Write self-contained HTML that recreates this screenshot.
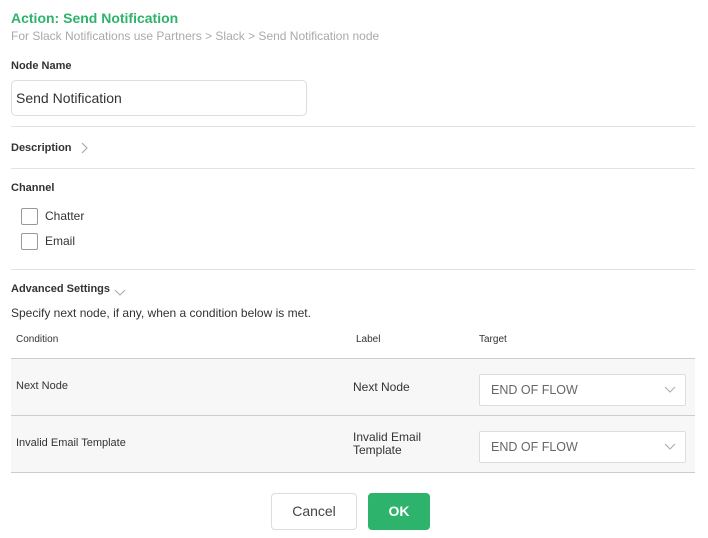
<!DOCTYPE html>
<html><head><style>
body{margin:0;width:708px;height:538px;background:#fff;font-family:"Liberation Sans",sans-serif;position:relative;overflow:hidden;color:#333}
.a{position:absolute;white-space:nowrap}
.lbl{font-size:11px;font-weight:bold;color:#333}
.hr{position:absolute;left:11px;width:684px;height:1px;background:#e2e2e2}
.cb{position:absolute;left:21px;width:15px;height:15px;border:1px solid #999;border-radius:2px;background:#fff}
.sel{position:absolute;left:479px;width:205px;height:30px;border:1px solid #ddd;border-radius:2px;background:#fff;font-size:12.5px;color:#666}
.sel span{position:absolute;left:11px;top:8px}
.sel svg{position:absolute;right:9px;top:11px}
</style></head><body>
<div class="a" style="left:11px;top:10px;font-size:14px;font-weight:bold;color:#2db36b">Action: Send Notification</div>
<div class="a" style="left:11px;top:29px;font-size:12px;color:#aaa">For Slack Notifications use Partners &gt; Slack &gt; Send Notification node</div>
<div class="a lbl" style="left:11px;top:60px">Node Name</div>
<div class="a" style="left:11px;top:80px;width:294px;height:34px;border:1px solid #ddd;border-radius:5px"></div>
<div class="a" style="left:16px;top:90px;font-size:14px;color:#333">Send Notification</div>
<div class="hr" style="top:126px"></div>
<div class="a lbl" style="left:11px;top:142px">Description</div>
<svg class="a" style="left:80px;top:142px" width="8" height="12"><path d="M2 1l5 5-5 5" stroke="#aaa" fill="none" stroke-width="1.2"/></svg>
<div class="hr" style="top:168px"></div>
<div class="a lbl" style="left:11px;top:182px">Channel</div>
<div class="cb" style="top:208px"></div><div class="a" style="left:45px;top:209px;font-size:12px">Chatter</div>
<div class="cb" style="top:233px"></div><div class="a" style="left:45px;top:234px;font-size:12px">Email</div>
<div class="hr" style="top:269px"></div>
<div class="a lbl" style="left:11px;top:283px">Advanced Settings</div>
<svg class="a" style="left:114px;top:289px" width="12" height="8"><path d="M1 1l5 5 5-5" stroke="#aaa" fill="none" stroke-width="1"/></svg>
<div class="a" style="left:11px;top:306px;font-size:12px">Specify next node, if any, when a condition below is met.</div>
<div class="a" style="left:16px;top:334px;font-size:10px">Condition</div>
<div class="a" style="left:356px;top:334px;font-size:10px">Label</div>
<div class="a" style="left:479px;top:334px;font-size:10px">Target</div>
<div class="a" style="left:11px;top:358px;width:684px;height:114px;background:#f7f7f7"></div>
<div class="hr" style="top:358px;background:#ccc"></div>
<div class="hr" style="top:415px;background:#ccc"></div>
<div class="hr" style="top:472px;background:#ccc"></div>
<div class="a" style="left:16px;top:380px;font-size:11px">Next Node</div>
<div class="a" style="left:353px;top:380px;font-size:12px">Next Node</div>
<div class="sel" style="top:374px"><span>END OF FLOW</span><svg width="12" height="8"><path d="M1 1l5 5 5-5" stroke="#aaa" fill="none"/></svg></div>
<div class="a" style="left:16px;top:437px;font-size:11px">Invalid Email Template</div>
<div class="a" style="left:353px;top:431px;font-size:12px;line-height:13px">Invalid Email<br>Template</div>
<div class="sel" style="top:431px"><span>END OF FLOW</span><svg width="12" height="8"><path d="M1 1l5 5 5-5" stroke="#aaa" fill="none"/></svg></div>
<div class="a" style="left:271px;top:493px;width:84px;height:35px;border:1px solid #ddd;border-radius:4px;font-size:14px;text-align:center;line-height:35px;color:#444">Cancel</div>
<div class="a" style="left:368px;top:493px;width:62px;height:37px;background:#2db36b;border-radius:4px;font-size:14px;font-weight:bold;color:#fff;text-align:center;line-height:36px">OK</div>
</body></html>
